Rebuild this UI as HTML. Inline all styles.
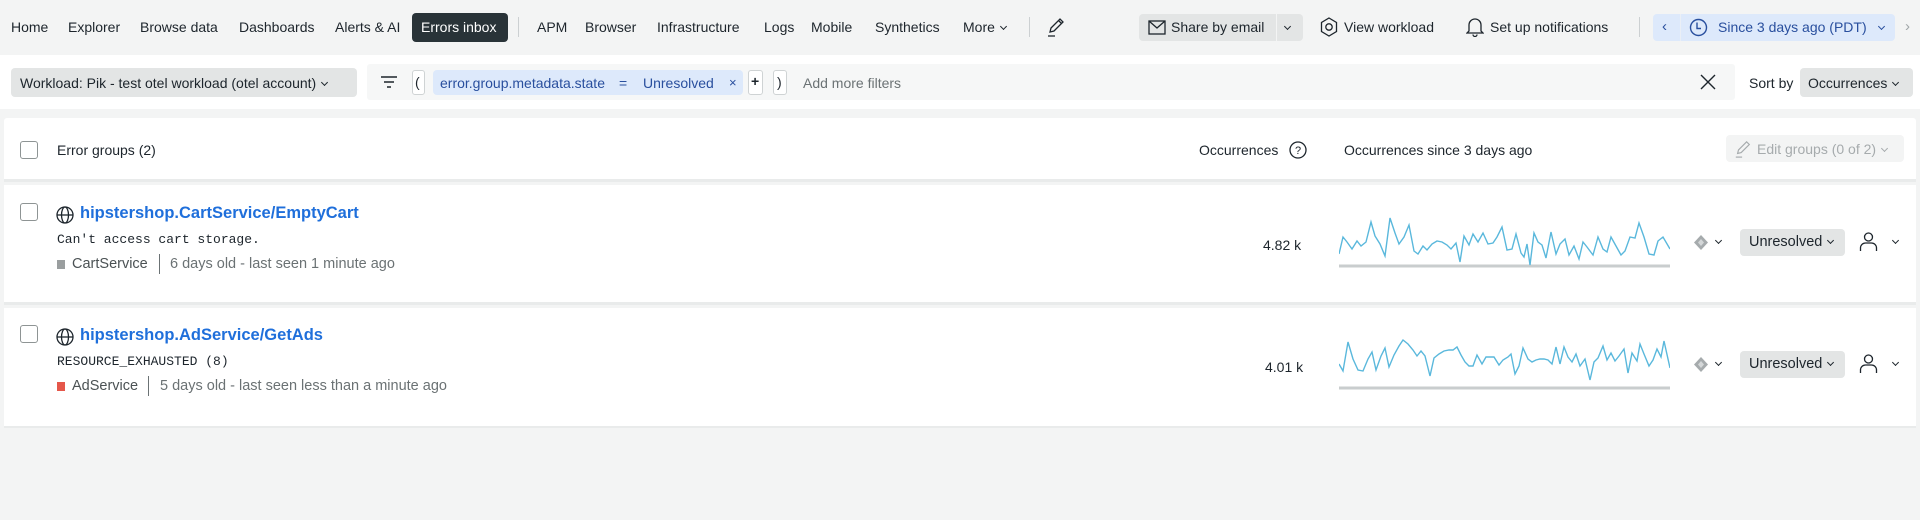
<!DOCTYPE html>
<html><head><meta charset="utf-8"><style>
*{box-sizing:border-box;margin:0;padding:0}
body{width:1920px;height:520px;background:#f3f4f4;font-family:"Liberation Sans",sans-serif;color:#1d252c;position:relative;overflow:hidden;font-size:14px}
.a{position:absolute;white-space:nowrap}
.nav{top:19px;font-size:14px;color:#1d252c}
.btn{position:absolute;border-radius:4px}
.sep{position:absolute;width:1px;background:#ccd0d2}
.chev{display:inline-block;width:5px;height:5px;border-right:1.3px solid currentColor;border-bottom:1.3px solid currentColor;transform:rotate(45deg);margin-left:6px;position:relative;top:-3px}
.cb{position:absolute;width:18px;height:18px;border:1.5px solid #8e9494;border-radius:3px;background:#fff}
.title{font-size:16.5px;font-weight:bold;color:#1f6fdb}
.mono{font-family:"Liberation Mono",monospace;font-size:13px;color:#1d252c}
.meta{font-size:14.5px;color:#6b7274}
</style></head><body>
<div class="a nav" style="left:11px">Home</div>
<div class="a nav" style="left:68px">Explorer</div>
<div class="a nav" style="left:140px">Browse data</div>
<div class="a nav" style="left:239px">Dashboards</div>
<div class="a nav" style="left:335px">Alerts &amp; AI</div>
<div class="btn" style="left:412px;top:13px;width:96px;height:29px;background:#293338"></div>
<div class="a nav" style="left:421px;color:#fff">Errors inbox</div>
<div class="sep" style="left:518px;top:17px;height:20px"></div>
<div class="a nav" style="left:537px">APM</div>
<div class="a nav" style="left:585px">Browser</div>
<div class="a nav" style="left:657px">Infrastructure</div>
<div class="a nav" style="left:764px">Logs</div>
<div class="a nav" style="left:811px">Mobile</div>
<div class="a nav" style="left:875px">Synthetics</div>
<div class="a nav" style="left:963px">More<span class="chev"></span></div>
<div class="sep" style="left:1029px;top:17px;height:20px"></div>
<svg class="a" style="left:1046px;top:16px" width="20" height="22" viewBox="0 0 20 22" fill="none" stroke="#1d252c" stroke-width="1.3"><path d="M4 16 L5 12 L14 3 L17 6 L8 15 Z M12.5 4.5 L15.5 7.5"/><path d="M2 20 H9"/></svg>
<div class="btn" style="left:1139px;top:14px;width:164px;height:27px;background:#e3e5e5"></div>
<div class="sep" style="left:1276px;top:14px;height:27px;background:#f3f4f4"></div>
<svg class="a" style="left:1148px;top:20px" width="18" height="15" viewBox="0 0 18 15" fill="none" stroke="#1d252c" stroke-width="1.3"><rect x="1" y="1" width="16" height="13"/><path d="M1 1 L9 8 L17 1"/></svg>
<div class="a nav" style="left:1171px">Share by email</div>
<div class="a nav" style="left:1285px"><span class="chev" style="margin-left:0"></span></div>
<svg class="a" style="left:1320px;top:17px" width="18" height="20" viewBox="0 0 18 20" fill="none" stroke="#1d252c" stroke-width="1.3"><path d="M9 1 L16.5 5.5 V14.5 L9 19 L1.5 14.5 V5.5 Z"/><circle cx="9" cy="10" r="3.2"/></svg>
<div class="a nav" style="left:1344px">View workload</div>
<svg class="a" style="left:1466px;top:16px" width="18" height="21" viewBox="0 0 18 21" fill="none" stroke="#1d252c" stroke-width="1.3"><path d="M3 15 V9 A6 6 0 0 1 15 9 V15 L17 17 H1 Z"/><path d="M7 18.5 A2 2 0 0 0 11 18.5"/></svg>
<div class="a nav" style="left:1490px">Set up notifications</div>
<div class="sep" style="left:1639px;top:17px;height:20px"></div>
<div class="btn" style="left:1653px;top:14px;width:242px;height:27px;background:#dde9fb"></div>
<div class="sep" style="left:1680px;top:14px;height:27px;background:#f3f4f4;opacity:.6"></div>
<div class="a" style="left:1662px;top:18px;color:#294f9e;font-size:15px">‹</div>
<svg class="a" style="left:1689px;top:18px" width="19" height="19" viewBox="0 0 19 19" fill="none" stroke="#294f9e" stroke-width="1.4"><circle cx="9.5" cy="9.5" r="8"/><path d="M8 4.5 V10.5 H12"/></svg>
<div class="a nav" style="left:1718px;color:#294f9e">Since 3 days ago (PDT)</div>
<div class="a nav" style="left:1879px;color:#294f9e"><span class="chev" style="margin-left:0"></span></div>
<div class="a" style="left:1905px;top:18px;color:#a0a6a8;font-size:15px">›</div>
<div class="a" style="left:0;top:55px;width:1920px;height:54px;background:#fff"></div>
<div class="btn" style="left:11px;top:68px;width:346px;height:29px;background:#e3e5e5"></div>
<div class="a nav" style="left:20px;top:75px">Workload: Pik - test otel workload (otel account)<span class="chev"></span></div>
<div class="btn" style="left:367px;top:64px;width:1368px;height:36px;background:#f6f7f7;border-radius:3px"></div>
<svg class="a" style="left:380px;top:75px" width="18" height="14" viewBox="0 0 18 14" stroke="#1d252c" stroke-width="1.4"><path d="M1 2 H17 M4 7 H14 M7 12 H11"/></svg>
<div class="btn" style="left:412px;top:70px;width:13px;height:25px;background:#fff;border:1px solid #cfd3d4;border-radius:3px"></div>
<div class="a" style="left:415px;top:74px;font-size:14px">(</div>
<div class="btn" style="left:433px;top:70px;width:310px;height:25px;background:#dde9fb"></div>
<div class="a" style="left:440px;top:75px;color:#294f9e;font-size:14px">error.group.metadata.state</div>
<div class="a" style="left:619px;top:75px;color:#294f9e;font-size:14px">=</div>
<div class="a" style="left:643px;top:75px;color:#294f9e;font-size:14px">Unresolved</div>
<div class="a" style="left:729px;top:75px;color:#294f9e;font-size:13px">×</div>
<div class="btn" style="left:748px;top:70px;width:15px;height:25px;background:#fff;border:1px solid #cfd3d4;border-radius:3px"></div>
<div class="a" style="left:751px;top:73px;font-size:14px;font-weight:bold">+</div>
<div class="btn" style="left:773px;top:70px;width:14px;height:25px;background:#fff;border:1px solid #cfd3d4;border-radius:3px"></div>
<div class="a" style="left:777px;top:74px;font-size:14px">)</div>
<div class="a" style="left:803px;top:75px;color:#6b7274;font-size:14px">Add more filters</div>
<svg class="a" style="left:1700px;top:74px" width="16" height="16" viewBox="0 0 16 16" stroke="#1d252c" stroke-width="1.4"><path d="M1 1 L15 15 M15 1 L1 15"/></svg>
<div class="a nav" style="left:1749px;top:75px">Sort by</div>
<div class="btn" style="left:1800px;top:68px;width:113px;height:29px;background:#e3e5e5"></div>
<div class="a nav" style="left:1808px;top:75px">Occurrences<span class="chev"></span></div>
<div class="a" style="left:4px;top:118px;width:1912px;height:64px;background:#fff;border-bottom:3px solid #e9ebeb;border-radius:3px 3px 0 0"></div>
<div class="a" style="left:4px;top:185px;width:1912px;height:120px;background:#fff;border-bottom:3px solid #e9ebeb"></div>
<div class="a" style="left:4px;top:308px;width:1912px;height:120px;background:#fff;border-bottom:2px solid #e9ebeb"></div>
<div class="cb" style="left:20px;top:141px"></div>
<div class="a" style="left:57px;top:142px;font-size:14px">Error groups (2)</div>
<div class="a" style="left:1199px;top:142px;font-size:14px">Occurrences</div>
<svg class="a" style="left:1289px;top:141px" width="18" height="18" viewBox="0 0 18 18" fill="none" stroke="#1d252c" stroke-width="1.3"><circle cx="9" cy="9" r="8"/><text x="9" y="13" text-anchor="middle" font-size="11" fill="#1d252c" stroke="none" font-family="Liberation Sans">?</text></svg>
<div class="a" style="left:1344px;top:142px;font-size:14px">Occurrences since 3 days ago</div>
<div class="btn" style="left:1726px;top:135px;width:178px;height:27px;background:#f3f4f4"></div>
<svg class="a" style="left:1734px;top:139px" width="18" height="20" viewBox="0 0 20 22" fill="none" stroke="#a6abad" stroke-width="1.3"><path d="M4 16 L5 12 L14 3 L17 6 L8 15 Z"/><path d="M2 20 H9"/></svg>
<div class="a" style="left:1757px;top:141px;color:#a6abad;font-size:14px">Edit groups (0 of 2)<span class="chev"></span></div>
<div class="cb" style="left:20px;top:203px"></div>
<svg class="a" style="left:56px;top:206px" width="18" height="18" viewBox="0 0 18 18" fill="none" stroke="#1d252c" stroke-width="1.3"><circle cx="9" cy="9" r="8"/><ellipse cx="9" cy="9" rx="3.5" ry="8"/><path d="M1 9 H17"/></svg>
<div class="a title" style="left:80px;top:204px">hipstershop.CartService/EmptyCart</div>
<div class="a mono" style="left:57px;top:232px">Can't access cart storage.</div>
<div class="a" style="left:57px;top:260px;width:8px;height:9px;background:#9a9e9f"></div>
<div class="a meta" style="left:72px;top:256px"><span style="color:#4b5254">CartService</span></div>
<div class="sep" style="left:159px;top:254px;height:20px;background:#6b7274"></div>
<div class="a meta" style="left:170px;top:256px">6 days old - last seen 1 minute ago</div>
<div class="a" style="left:1263px;top:237px;font-size:14px">4.82 k</div>
<svg class="a" style="left:1339px;top:216px" width="331" height="52" viewBox="0 0 331 52" fill="none"><path d="M0 50 H331" stroke="#c9cdce" stroke-width="3"/><polyline stroke="#5ab8dc" stroke-width="1.4" points="0,38 4,21 8,26 13,33 18,25 22,30 27,26 32,6 36,20 41,28 46,40 51,2 56,17 60,28 65,21 70,9 75,35 79,38 84,30 88,34 93,28 98,25 103,26 108,29 112,33 117,27 121,46 125,20 130,29 134,18 139,26 144,17 149,28 154,27 158,21 163,11 168,34 173,33 177,18 182,37 185,41 188,28 191,49 195,17 199,26 203,29 207,42 212,16 217,38 221,28 226,23 230,39 235,30 240,43 244,26 248,31 254,39 259,21 264,33 268,36 272,21 277,30 282,39 286,35 291,21 296,22 300,7 305,21 310,38 315,39 319,25 324,21 331,33"/></svg>
<svg class="a" style="left:1693px;top:234px" width="16" height="17" viewBox="0 0 16 17"><path d="M8 1 L15 8.5 L8 16 L1 8.5 Z" fill="#a6abad"/><path d="M8 5 L11 8.5 L8 12 L5 8.5 Z" fill="#d4d7d8"/></svg>
<div class="a" style="left:1716px;top:235px;font-size:12px"><span class="chev" style="margin-left:0"></span></div>
<div class="btn" style="left:1740px;top:229px;width:105px;height:27px;background:#e3e5e5"></div>
<div class="a" style="left:1749px;top:234px;font-size:14.5px;color:#1d252c">Unresolved<span class="chev"></span></div>
<svg class="a" style="left:1859px;top:232px" width="19" height="20" viewBox="0 0 19 20" fill="none" stroke="#1d252c" stroke-width="1.3"><circle cx="9.5" cy="5" r="4"/><path d="M1.5 19 V16 A5 5 0 0 1 6.5 11 H12.5 A5 5 0 0 1 17.5 16 V19"/></svg>
<div class="a" style="left:1893px;top:235px;font-size:12px"><span class="chev" style="margin-left:0"></span></div>
<div class="cb" style="left:20px;top:325px"></div>
<svg class="a" style="left:56px;top:328px" width="18" height="18" viewBox="0 0 18 18" fill="none" stroke="#1d252c" stroke-width="1.3"><circle cx="9" cy="9" r="8"/><ellipse cx="9" cy="9" rx="3.5" ry="8"/><path d="M1 9 H17"/></svg>
<div class="a title" style="left:80px;top:326px">hipstershop.AdService/GetAds</div>
<div class="a mono" style="left:57px;top:354px">RESOURCE_EXHAUSTED (8)</div>
<div class="a" style="left:57px;top:382px;width:8px;height:9px;background:#e5574a"></div>
<div class="a meta" style="left:72px;top:378px"><span style="color:#4b5254">AdService</span></div>
<div class="sep" style="left:148px;top:376px;height:20px;background:#6b7274"></div>
<div class="a meta" style="left:160px;top:378px">5 days old - last seen less than a minute ago</div>
<div class="a" style="left:1265px;top:359px;font-size:14px">4.01 k</div>
<svg class="a" style="left:1339px;top:338px" width="331" height="52" viewBox="0 0 331 52" fill="none"><path d="M0 50 H331" stroke="#c9cdce" stroke-width="3"/><polyline stroke="#5ab8dc" stroke-width="1.4" points="0,26 4,33 9,4 14,21 19,32 24,33 29,21 33,14 37,32 42,18 46,10 50,29 55,17 60,8 64,2 69,6 74,12 78,18 82,13 86,18 91,38 95,20 100,16 105,13 110,12 114,12 118,9 122,17 126,24 130,28 134,28 138,17 143,26 147,19 151,19 155,19 160,27 164,22 169,19 172,16 176,36 180,28 184,10 189,21 193,24 197,22 201,21 205,21 209,22 213,26 217,9 221,26 225,9 229,19 233,24 237,16 241,28 246,21 251,42 255,24 259,20 264,8 268,22 272,15 276,23 280,18 285,11 289,35 293,15 298,23 301,6 305,16 310,28 314,22 318,11 322,19 325,3 331,30"/></svg>
<svg class="a" style="left:1693px;top:356px" width="16" height="17" viewBox="0 0 16 17"><path d="M8 1 L15 8.5 L8 16 L1 8.5 Z" fill="#a6abad"/><path d="M8 5 L11 8.5 L8 12 L5 8.5 Z" fill="#d4d7d8"/></svg>
<div class="a" style="left:1716px;top:357px;font-size:12px"><span class="chev" style="margin-left:0"></span></div>
<div class="btn" style="left:1740px;top:351px;width:105px;height:27px;background:#e3e5e5"></div>
<div class="a" style="left:1749px;top:356px;font-size:14.5px;color:#1d252c">Unresolved<span class="chev"></span></div>
<svg class="a" style="left:1859px;top:354px" width="19" height="20" viewBox="0 0 19 20" fill="none" stroke="#1d252c" stroke-width="1.3"><circle cx="9.5" cy="5" r="4"/><path d="M1.5 19 V16 A5 5 0 0 1 6.5 11 H12.5 A5 5 0 0 1 17.5 16 V19"/></svg>
<div class="a" style="left:1893px;top:357px;font-size:12px"><span class="chev" style="margin-left:0"></span></div>
</body></html>
